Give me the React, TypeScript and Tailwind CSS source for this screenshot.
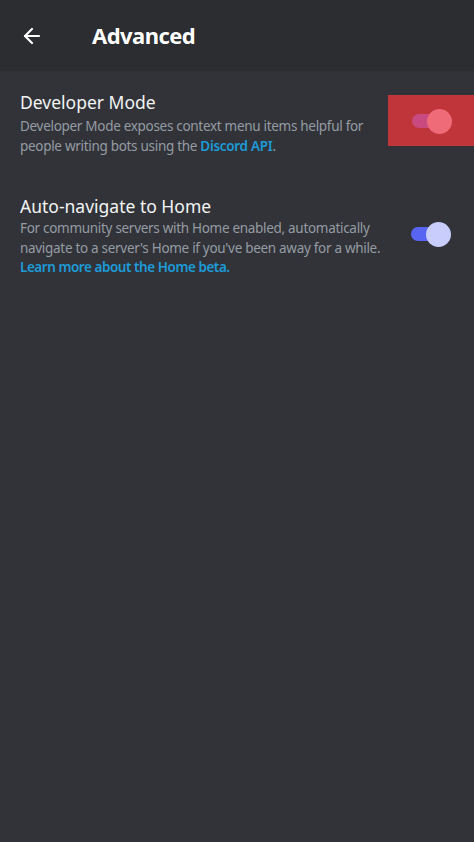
import { ArrowLeft } from "lucide-react";

function Toggle() {
  return (
    <div className="relative h-[38px] w-[40px]">
      <div className="absolute left-0 top-[12px] h-[14px] w-[30px] rounded-full bg-[#5865f2]" />
      <div className="absolute right-0 top-[7px] h-[25px] w-[25px] rounded-full bg-[#c9cdfb]" />
    </div>
  );
}

function HighlightedToggle() {
  return (
    <div className="relative h-[38px] w-[40px]">
      <div className="absolute left-0 top-[12px] h-[14px] w-[30px] rounded-full bg-[#c94a80]" />
      <div className="absolute right-0 top-[7px] h-[25px] w-[25px] rounded-full bg-[#ef6b78]" />
    </div>
  );
}

export default function App() {
  return (
    <div
      className="flex h-[842px] w-full flex-col bg-[#313338] text-white"
      style={{ fontFamily: '"Noto Sans", "Open Sans", sans-serif' }}
    >
      {/* Header */}
      <header className="flex h-[71px] shrink-0 items-center bg-[#2b2d31] pl-5">
        <ArrowLeft className="h-[24px] w-[24px] text-white" strokeWidth={2.2} />
        <h1 className="ml-[48px] text-[22px] font-bold tracking-tight">Advanced</h1>
      </header>

      {/* Developer Mode */}
      <section className="flex items-start pt-[19px]">
        <div className="flex-1 pl-5">
          <h2 className="text-[17.5px] leading-[24px] text-[#f2f3f5]">Developer Mode</h2>
          <p className="mt-[2px] whitespace-nowrap text-[13.5px] leading-[20px] tracking-[-0.3px] text-[#959ba3]">
            Developer Mode exposes context menu items helpful for
            <br />
            people writing bots using the{" "}
            <span className="font-semibold text-[#1d9bd8]">Discord API</span>.
          </p>
        </div>
        <div className="ml-[14px] mt-[5px] flex h-[51px] w-[86px] shrink-0 items-center bg-[#c0353a] pl-[24px]">
          <HighlightedToggle />
        </div>
      </section>

      {/* Auto-navigate to Home */}
      <section className="flex items-center pr-[23px] pt-[38px]">
        <div className="flex-1 pl-5">
          <h2 className="text-[17.5px] leading-[24px] text-[#f2f3f5]">Auto-navigate to Home</h2>
          <p className="mt-[1px] whitespace-nowrap text-[13.5px] leading-[19.5px] tracking-[-0.3px] text-[#959ba3]">
            For community servers with Home enabled, automatically
            <br />
            navigate to a server's Home if you've been away for a while.
          </p>
          <p className="text-[13.5px] font-semibold leading-[19.5px] tracking-[-0.45px] text-[#1d9bd8]">
            Learn more about the Home beta.
          </p>
        </div>
        <div className="-mt-[4px] shrink-0">
          <Toggle />
        </div>
      </section>
    </div>
  );
}
